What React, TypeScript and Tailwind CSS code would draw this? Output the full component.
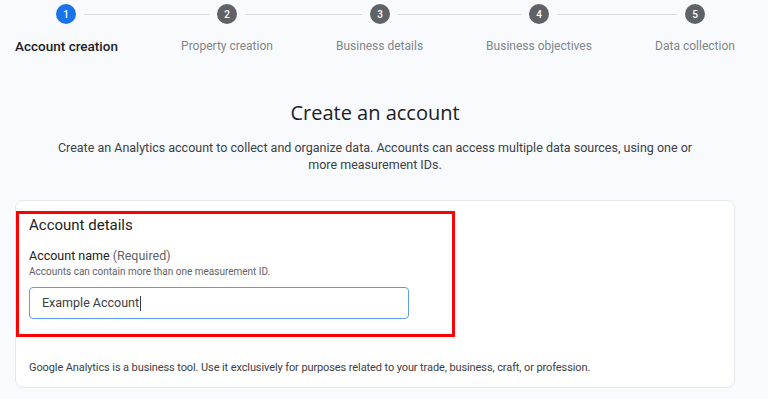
import React from "react";

const steps = [
  { n: 1, label: "Account creation", w: "w-[103px]" },
  { n: 2, label: "Property creation", w: "w-[92px]" },
  { n: 3, label: "Business details", w: "w-[87px]" },
  { n: 4, label: "Business objectives", w: "w-[106px]" },
  { n: 5, label: "Data collection", w: "w-[80px]" },
];

function Circle({ n, active }: { n: number; active?: boolean }) {
  return (
    <div
      className={
        "flex h-[20px] w-[20px] shrink-0 items-center justify-center rounded-full text-[10px] font-medium text-white " +
        (active ? "bg-[#1a73e8]" : "bg-[#5f6368]")
      }
    >
      {n}
    </div>
  );
}

export default function App() {
  return (
    <div
      className="h-[399px] w-[768px] overflow-hidden bg-[#f8fafd]"
      style={{ fontFamily: "Roboto, 'Liberation Sans', sans-serif" }}
    >
      <div className="ml-[15px] w-[720px]">
        {/* stepper circles */}
        <div className="flex items-center pt-[4px] pl-[41px]">
          <Circle n={1} active />
          <div className="mx-2 h-px w-[125px] bg-[#dadce0]" />
          <Circle n={2} />
          <div className="mx-2 h-px w-[117px] bg-[#dadce0]" />
          <Circle n={3} />
          <div className="mx-2 h-px w-[123px] bg-[#dadce0]" />
          <Circle n={4} />
          <div className="mx-2 h-px w-[120px] bg-[#dadce0]" />
          <Circle n={5} />
        </div>
        {/* stepper labels */}
        <div className="mt-[13px] flex gap-[63px] leading-[18px]">
          {steps.map((s, i) => (
            <div
              key={s.n}
              className={
                "flex justify-center whitespace-nowrap " +
                s.w +
                " " +
                (i === 0
                  ? "text-[13.5px] font-medium text-[#202124]"
                  : "text-[12px] text-[#80868b]")
              }
            >
              {s.label}
            </div>
          ))}
        </div>

        {/* heading */}
        <h1
          className="mt-[45px] text-center text-[20px] leading-[26px] text-[#202124]"
          style={{ fontFamily: "'Open Sans', Roboto, sans-serif" }}
        >
          Create an account
        </h1>
        <p className="mx-auto mt-[13px] max-w-[650px] text-center text-[12.5px] leading-[17px] text-[#3c4043]">
          Create an Analytics account to collect and organize data. Accounts can access multiple data
          sources, using one or more measurement IDs.
        </p>

        {/* card */}
        <div className="mt-[27px] h-[188px] w-[720px] rounded-[8px] border border-[#e4e7eb] bg-white pt-[10px]">
          <div className="h-[126px] w-[439px] border-[3px] border-[#ff0000] pl-[10px] pt-[1px]">
            <div className="text-[15px] leading-[20px] text-[#202124]">Account details</div>
            <div className="mt-[13px] text-[12.5px] leading-[16px] text-[#202124]">
              Account name <span className="text-[#5f6368]">(Required)</span>
            </div>
            <div className="mt-[1px] text-[10px] leading-[14px] text-[#5f6368]">
              Accounts can contain more than one measurement ID.
            </div>
            <div className="mt-[8px] flex h-[32px] w-[380px] items-center rounded-[4px] border border-[#5b9bf0] pl-[12px] text-[12.5px] text-[#3c4043]">
              Example Account
              <span className="ml-px inline-block h-[15px] w-px bg-[#3c4043]" />
            </div>
          </div>
          <div className="mt-[23px] pl-[13px] text-[11px] leading-[16px] tracking-[-0.1px] text-[#3c4043]">
            Google Analytics is a business tool. Use it exclusively for purposes related to your trade,
            business, craft, or profession.
          </div>
        </div>
      </div>
    </div>
  );
}
